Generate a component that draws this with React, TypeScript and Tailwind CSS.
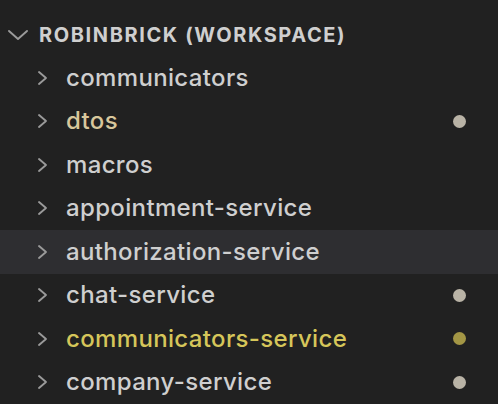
import React from "react";

type Item = { name: string; color?: string; dot?: string; active?: boolean };

const items: Item[] = [
  { name: "communicators" },
  { name: "dtos", color: "text-[#d8c79c]", dot: "bg-[#b9b3a6]" },
  { name: "macros" },
  { name: "appointment-service" },
  { name: "authorization-service", active: true },
  { name: "chat-service", dot: "bg-[#b9b3a6]" },
  { name: "communicators-service", color: "text-[#d6c65a]", dot: "bg-[#a39645]" },
  { name: "company-service", dot: "bg-[#b9b3a6]" },
];

const Chevron = () => (
  <svg width="12" height="20" viewBox="0 0 12 20" className="shrink-0">
    <path d="M2 4 L9 10 L2 16" fill="none" stroke="#9a9a9a" strokeWidth="1.9" strokeLinecap="round" strokeLinejoin="round" />
  </svg>
);

const App = () => {
  return (
    <div className="w-[498px] h-[404px] overflow-hidden bg-[#212121] font-['Inter',sans-serif] pt-[14px]">
      <div className="flex items-center h-[42px] pl-[7px] gap-[10px]">
        <svg width="22" height="14" viewBox="0 0 22 14" className="shrink-0">
          <path d="M2 3 L11 11 L20 3" fill="none" stroke="#9a9a9a" strokeWidth="1.9" strokeLinecap="round" strokeLinejoin="round" />
        </svg>
        <span className="text-[20px] font-bold text-[#cfcfcf] tracking-[1.6px] whitespace-nowrap">ROBINBRICK (WORKSPACE)</span>
      </div>
      {items.map((it) => (
        <div
          key={it.name}
          className={`flex items-center h-[43.5px] pl-[37px] pr-[32px] ${it.active ? "bg-[#2e2e31]" : ""}`}
        >
          <Chevron />
          <span className={`ml-[17px] text-[24px] font-medium tracking-[0.35px] whitespace-nowrap ${it.color ?? "text-[#cfcfcf]"}`}>{it.name}</span>
          {it.dot && <span className={`ml-auto w-[13px] h-[13px] rounded-full ${it.dot}`} />}
        </div>
      ))}
    </div>
  );
};

export default App;
